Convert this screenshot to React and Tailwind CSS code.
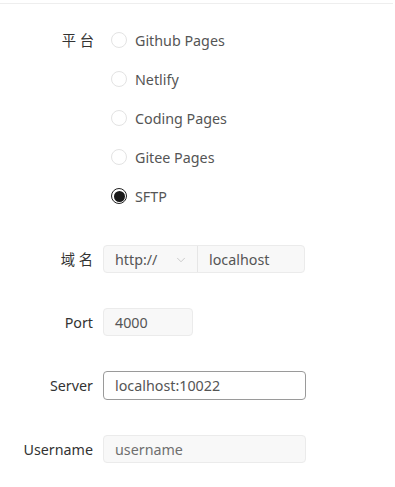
import { ChevronDown } from 'lucide-react';

const platforms = ['Github Pages', 'Netlify', 'Coding Pages', 'Gitee Pages', 'SFTP'];

function Radio({ label, checked }) {
  return (
    <div className="flex items-center h-[24px] pl-2 gap-2">
      {checked ? (
        <span className="w-4 h-4 rounded-full border border-[#222] flex items-center justify-center bg-white">
          <span className="w-[11px] h-[11px] rounded-full bg-[#1a1a1a]" />
        </span>
      ) : (
        <span className="w-4 h-4 rounded-full border border-[#e3e3e3] bg-white" />
      )}
      <span className="text-[14.3px] text-[#555] pt-[1px]">{label}</span>
    </div>
  );
}

function Row({ label, children }) {
  return (
    <div className="flex items-center">
      <div className="w-[94px] pr-[1px] pt-[1px] text-right text-[14.3px] text-[#333] shrink-0">{label}</div>
      <div className="ml-[9px]">{children}</div>
    </div>
  );
}

export default function App() {
  return (
    <div className="w-[395px] h-[487px] bg-white overflow-hidden" style={{ fontFamily: '"Noto Sans", "Noto Sans CJK SC", sans-serif' }}>
      <div className="h-[3px]" />
      <div className="w-[393px] border-t border-[#eeeeee]" />

      <div className="pt-[24px]">
        <div className="flex items-start">
          <div className="w-[94px] h-[24px] pt-[1px] flex items-center justify-end text-[14.3px] text-[#333] shrink-0">平 台</div>
          <div className="ml-[9px] flex flex-col gap-[15px]">
            {platforms.map((p) => (
              <Radio key={p} label={p} checked={p === 'SFTP'} />
            ))}
          </div>
        </div>

        <div className="mt-[37px] flex flex-col gap-[35px]">
          <Row label="域 名">
            <div className="flex h-[28px] w-[202px] rounded-[4px] border border-[#ebebeb] bg-[#f8f8f8] text-[14.3px] text-[#555]">
              <div className="w-[94px] flex items-center justify-between pl-[11px] pr-[9px] pt-[1px] border-r border-[#e6e6e6]">
                <span>http://</span>
                <ChevronDown className="w-[14px] h-[14px] text-[#bbb]" strokeWidth={1.3} />
              </div>
              <div className="flex items-center pl-[11px] pt-[1px]">localhost</div>
            </div>
          </Row>

          <Row label="Port">
            <div className="h-[28px] w-[90px] rounded-[4px] border border-[#ebebeb] bg-[#f8f8f8] flex items-center pl-[11px] pt-[1px] text-[14.3px] text-[#555]">
              4000
            </div>
          </Row>

          <Row label="Server">
            <div className="h-[29px] w-[203px] rounded-[4px] border border-[#9a9a9a] bg-white flex items-center pl-[11px] pt-[1px] text-[14.3px] text-[#555]">
              localhost:10022
            </div>
          </Row>

          <Row label="Username">
            <div className="h-[28px] w-[203px] rounded-[4px] border border-[#ebebeb] bg-[#f8f8f8] flex items-center pl-[11px] pt-[1px] text-[14.3px] text-[#6f6f6f]">
              username
            </div>
          </Row>
        </div>
      </div>
    </div>
  );
}
